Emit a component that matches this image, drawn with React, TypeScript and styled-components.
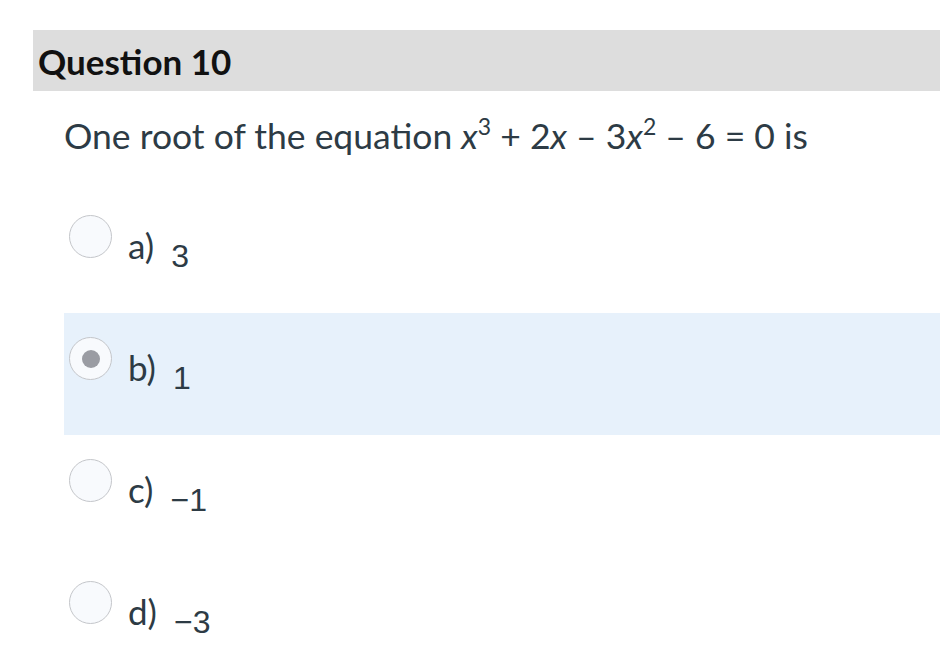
import React from "react";
import styled, { createGlobalStyle } from "styled-components";

const GlobalStyle = createGlobalStyle`
  body {
    margin: 0;
    background: #fff;
    font-family: Lato, "Noto Sans", sans-serif;
    color: #2d3b45;
  }
`;

const Page = styled.div`
  padding-top: 30px;
  width: 940px;
`;

const Header = styled.div`
  margin-left: 33px;
  height: 61px;
  background: #dddddd;
  display: flex;
  align-items: center;
  padding-left: 5px;
  font-size: 35px;
  font-weight: 700;
  color: #111;
`;

const Prompt = styled.div`
  padding: 21px 0 0 64px;
  height: 100px;
  box-sizing: border-box;
  font-size: 35.5px;
  line-height: 48px;
`;

const Var = styled.i`
  font-style: italic;
`;

const Sup = styled.sup`
  font-size: 23px;
  line-height: 0;
  vertical-align: 14px;
`;

const Options = styled.div`
  margin-left: 64px;
`;

const Option = styled.div<{ selected?: boolean }>`
  height: 122px;
  box-sizing: border-box;
  padding: 24px 0 0 5px;
  display: flex;
  align-items: flex-start;
  background: ${({ selected }) => (selected ? "#e7f1fb" : "transparent")};
`;

const Radio = styled.span<{ checked?: boolean }>`
  width: 43px;
  height: 43px;
  box-sizing: border-box;
  border-radius: 50%;
  border: 1px solid #c4c6ca;
  background: #f8fafd;
  display: flex;
  align-items: center;
  justify-content: center;
  flex-shrink: 0;

  &::after {
    content: "";
    width: 18px;
    height: 18px;
    border-radius: 50%;
    background: ${({ checked }) => (checked ? "#9a9ca3" : "transparent")};
  }
`;

const Label = styled.span`
  margin-left: 16px;
  margin-top: 10px;
  font-size: 35px;
  line-height: 40px;
  color: #2d3b45;
`;

const Value = styled.span`
  margin-left: 17px;
  font-family: "Liberation Sans", Arial, sans-serif;
  font-size: 32px;
  display: inline-block;
  vertical-align: -8px;
`;

const answers = [
  { key: "a)", value: "3" },
  { key: "b)", value: "1", selected: true },
  { key: "c)", value: "\u22121" },
  { key: "d)", value: "\u22123" },
];

export default function App() {
  return (
    <Page>
      <GlobalStyle />
      <Header>Question 10</Header>
      <Prompt>
        One root of the equation <Var>x</Var>
        <Sup>3</Sup> + 2<Var>x</Var> – 3<Var>x</Var>
        <Sup>2</Sup> – 6 = 0 is
      </Prompt>
      <Options>
        {answers.map((a) => (
          <Option key={a.key} selected={a.selected}>
            <Radio checked={a.selected} />
            <Label>
              {a.key}
              <Value>{a.value}</Value>
            </Label>
          </Option>
        ))}
      </Options>
    </Page>
  );
}
